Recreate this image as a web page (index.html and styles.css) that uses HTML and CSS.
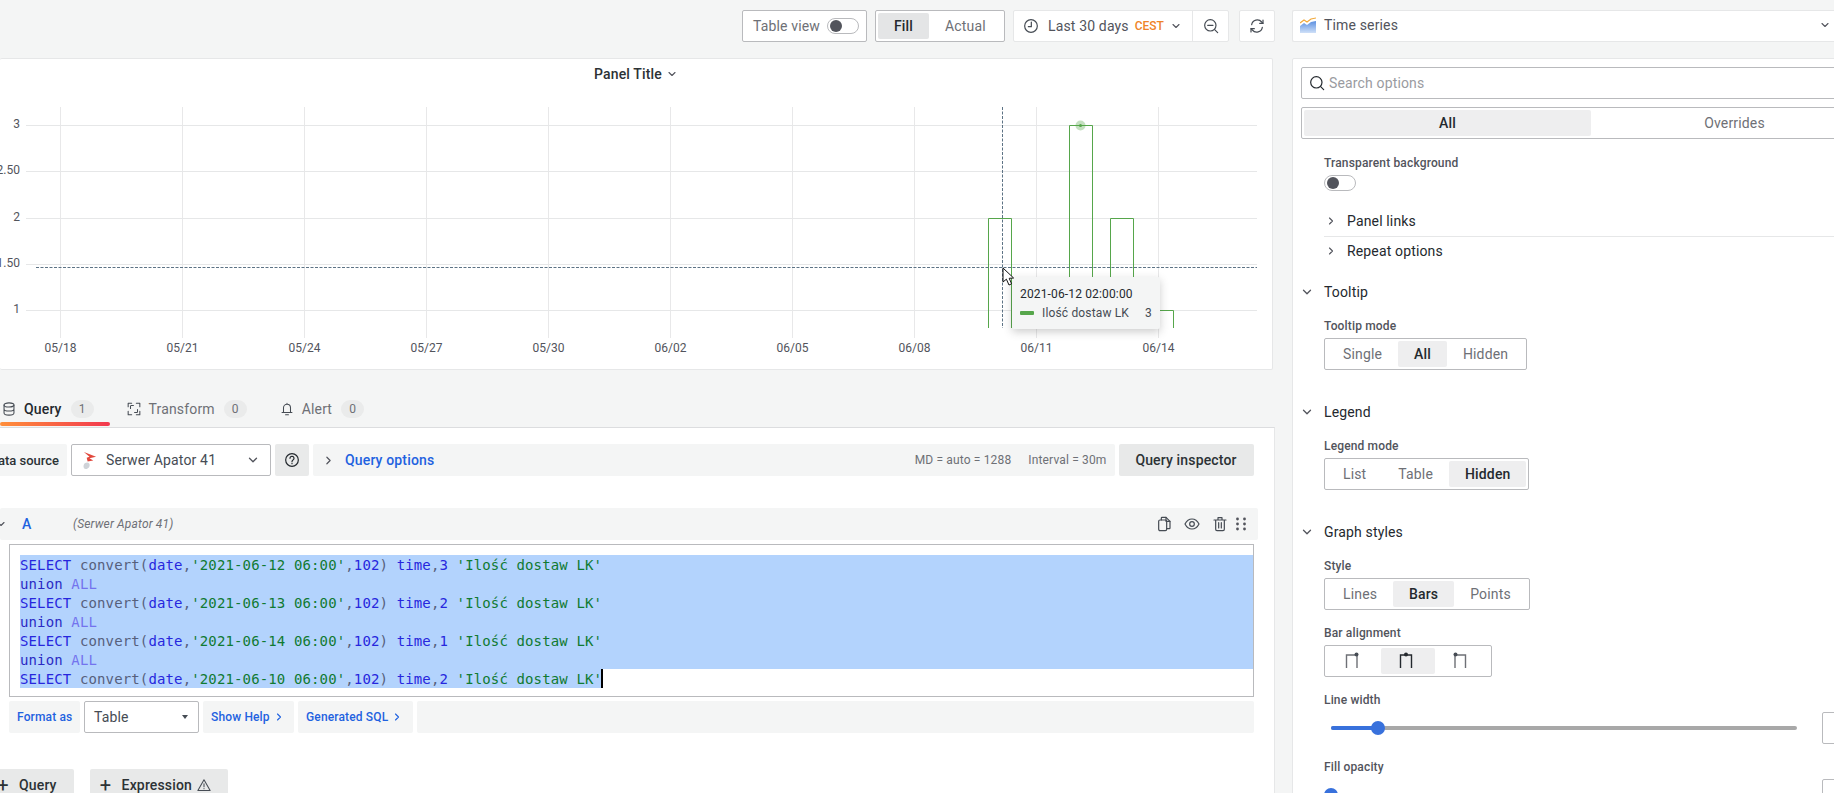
FILE: index.html
```html
<!DOCTYPE html>
<html lang="en">
<head>
  <meta charset="utf-8">
  <title>Edit panel</title>
  <link rel="stylesheet" href="styles.css">
</head>
<body>
  <div class="page">

    <!-- left: toolbar, chart, query editor -->
    <div class="main">
      <div class="toolbar">
        <div class="box table-view">
          <span>Table view</span>
          <span class="switch"></span>
        </div>
        <div class="box radio top-radio">
          <span class="seg active">Fill</span>
          <span class="seg">Actual</span>
        </div>
        <div class="time-group">
          <div class="time-range">
            <svg class="icon-16" viewBox="0 0 24 24"><circle cx="12" cy="12" r="9.5"/><path d="M12.5 6v7H8"/></svg>
            <span class="time-label">Last 30 days</span>
            <span class="tz">CEST</span>
            <svg class="chev" viewBox="0 0 24 24"><path d="M6 9l6 6 6-6"/></svg>
          </div>
          <div class="time-zoom">
            <svg class="icon-16" viewBox="0 0 24 24"><circle cx="11" cy="11" r="8.5"/><path d="M7 11h8M17.5 17.5L22 22"/></svg>
          </div>
        </div>
        <div class="refresh">
          <svg class="icon-16" viewBox="0 0 24 24"><path d="M4 10a8.5 8.5 0 0 1 15-4l2 2M20 14a8.5 8.5 0 0 1-15 4l-2-2"/><path d="M21 3v5h-5M3 21v-5h5"/></svg>
        </div>
      </div>

      <div class="panel">
        <div class="panel-title">Panel Title
          <svg class="chev" viewBox="0 0 24 24"><path d="M6 9l6 6 6-6"/></svg>
        </div>
        <svg class="chart" viewBox="0 107 1272 262" width="1272" height="262">
          <g class="grid-v">
            <path d="M60.5 107V338M182.5 107V338M304.5 107V338M426.5 107V338M548.5 107V338M670.5 107V338M792.5 107V338M914.5 107V338M1036.5 107V338M1158.5 107V338"/>
          </g>
          <g class="grid-h">
            <path d="M26 125.5H1257M26 171.5H1257M26 218.5H1257M26 264.5H1257M26 310.5H1257"/>
          </g>
          <g class="axis-y">
            <text x="20" y="128">3</text>
            <text x="20" y="174">2.50</text>
            <text x="20" y="221">2</text>
            <text x="20" y="267">1.50</text>
            <text x="20" y="313">1</text>
          </g>
          <g class="axis-x">
            <text x="60.5" y="352">05/18</text>
            <text x="182.5" y="352">05/21</text>
            <text x="304.5" y="352">05/24</text>
            <text x="426.5" y="352">05/27</text>
            <text x="548.5" y="352">05/30</text>
            <text x="670.5" y="352">06/02</text>
            <text x="792.5" y="352">06/05</text>
            <text x="914.5" y="352">06/08</text>
            <text x="1036.5" y="352">06/11</text>
            <text x="1158.5" y="352">06/14</text>
          </g>
          <path class="bars" d="M988.5 328V218.5H1011.5V328M1069.5 328V125.5H1092.5V328M1110.5 328V218.5H1133.5V328M1150.5 328V310.5H1173.5V328"/>
          <path class="cross" d="M36 267.5H1257M1002.5 107V328"/>
          <circle class="hover-ring" cx="1080.5" cy="125.5" r="5"/>
          <circle class="hover-dot" cx="1080.5" cy="125.5" r="1.5"/>
        </svg>
        <div class="chart-tip">
          <div class="tip-time">2021-06-12 02:00:00</div>
          <div class="tip-row">
            <span class="tip-swatch"></span>
            <span class="tip-name">Ilość dostaw LK</span>
            <span class="tip-val">3</span>
          </div>
        </div>
        <svg class="mouse" viewBox="0 0 13 19" width="13" height="19"><path d="M1 1V15L4.4 12.2L7 18L9.6 16.8L7.2 11.3L11.6 11Z"/></svg>
      </div>

      <div class="tabs">
        <div class="tab tab-active">
          <svg class="icon-14" viewBox="0 0 24 24"><ellipse cx="12" cy="5" rx="8.5" ry="3.5"/><path d="M3.5 5v14c0 2 3.8 3.5 8.5 3.5s8.5-1.500 8.500-3.500V5M3.500 12c0 2 3.800 3.500 8.500 3.500s8.500-1.500 8.500-3.500"/></svg>
          <span>Query</span><span class="badge">1</span>
        </div>
        <div class="tab">
          <svg class="icon-14" viewBox="0 0 24 24"><path d="M2 8V2h6M16 2h6v6M22 16v6h-6M8 22H2v-6M7 6h4M6 7v4M18 13v4M13 18h4"/></svg>
          <span>Transform</span><span class="badge">0</span>
        </div>
        <div class="tab">
          <svg class="icon-14" viewBox="0 0 24 24"><path d="M6 17V10a6 6 0 0 1 12 0v7M3.500 18h17M9.500 22h5M12 4V2"/></svg>
          <span>Alert</span><span class="badge">0</span>
        </div>
      </div>

      <div class="editor-pane">
        <div class="ds-row">
          <div class="ds-label">Data source</div>
          <div class="ds-select">
            <svg class="ds-logo" viewBox="0 0 16 20" width="15" height="19">
              <path fill="#e2483d" d="M2 1l13 5-7 1.500 4 2.500-6 1-1-4 3-1z"/>
              <path fill="#cfd3d8" d="M3 13c3-2 6 0 5 3s-5 4-6 2 0-4 1-5z"/>
            </svg>
            <span class="ds-name">Serwer Apator 41</span>
            <svg class="chev" viewBox="0 0 24 24"><path d="M6 9l6 6 6-6"/></svg>
          </div>
          <div class="ds-help">
            <svg class="icon-16 dark" viewBox="0 0 24 24"><circle cx="12" cy="12" r="9.500"/><path d="M9 9.500a3 3 0 1 1 4.500 2.600c-1 .6-1.500 1.200-1.500 2.400M12 17v.5"/></svg>
          </div>
          <div class="options-bar">
            <svg class="chev-right" viewBox="0 0 24 24"><path d="M9 6l6 6-6 6"/></svg>
            <span class="options-link">Query options</span>
            <span class="options-meta">MD = auto = 1288</span>
            <span class="options-meta">Interval = 30m</span>
          </div>
          <div class="btn-inspector">Query inspector</div>
        </div>

        <div class="query-row">
          <svg class="chev" viewBox="0 0 24 24"><path d="M6 9l6 6 6-6"/></svg>
          <span class="query-letter">A</span>
          <span class="query-ds">(Serwer Apator 41)</span>
          <div class="query-actions">
            <svg class="icon-16" viewBox="0 0 24 24"><path d="M8 6V3a1 1 0 0 1 1-1h6l6 6v10a1 1 0 0 1-1 1h-4"/><path d="M15 2v6h6"/><rect x="4" y="6" width="12" height="16" rx="2"/></svg>
            <svg class="icon-16" viewBox="0 0 24 24"><path d="M1.500 12C4 7 8 4.500 12 4.500S20 7 22.500 12C20 17 16 19.500 12 19.500S4 17 1.500 12z"/><circle cx="12" cy="12" r="3.500"/></svg>
            <svg class="icon-16" viewBox="0 0 24 24"><path d="M3 6h18M9 6V2.500h6V6M5.500 6v14a2 2 0 0 0 2 2h9a2 2 0 0 0 2-2V6M10 10v8M14 10v8"/></svg>
            <svg class="grip" viewBox="0 0 10 14" width="10" height="14"><circle cx="1.500" cy="2" r="1.400"/><circle cx="8.500" cy="2" r="1.400"/><circle cx="1.500" cy="7" r="1.400"/><circle cx="8.500" cy="7" r="1.400"/><circle cx="1.500" cy="12" r="1.400"/><circle cx="8.500" cy="12" r="1.400"/></svg>
          </div>
        </div>

        <div class="code">
          <div class="code-line"><span class="k">SELECT</span> <span class="f">convert(</span><span class="k">date</span><span class="f">,</span><span class="s">'2021-06-12 06:00'</span><span class="f">,</span><span class="k">102</span><span class="f">)</span> <span class="k">time</span><span class="f">,</span><span class="k">3</span> <span class="s">'Ilość dostaw LK'</span></div>
          <div class="code-line"><span class="u">union</span> <span class="a">ALL</span></div>
          <div class="code-line"><span class="k">SELECT</span> <span class="f">convert(</span><span class="k">date</span><span class="f">,</span><span class="s">'2021-06-13 06:00'</span><span class="f">,</span><span class="k">102</span><span class="f">)</span> <span class="k">time</span><span class="f">,</span><span class="k">2</span> <span class="s">'Ilość dostaw LK'</span></div>
          <div class="code-line"><span class="u">union</span> <span class="a">ALL</span></div>
          <div class="code-line"><span class="k">SELECT</span> <span class="f">convert(</span><span class="k">date</span><span class="f">,</span><span class="s">'2021-06-14 06:00'</span><span class="f">,</span><span class="k">102</span><span class="f">)</span> <span class="k">time</span><span class="f">,</span><span class="k">1</span> <span class="s">'Ilość dostaw LK'</span></div>
          <div class="code-line"><span class="u">union</span> <span class="a">ALL</span></div>
          <div class="code-line last"><div class="code-sel"><span class="k">SELECT</span> <span class="f">convert(</span><span class="k">date</span><span class="f">,</span><span class="s">'2021-06-10 06:00'</span><span class="f">,</span><span class="k">102</span><span class="f">)</span> <span class="k">time</span><span class="f">,</span><span class="k">2</span> <span class="s">'Ilość dostaw LK'</span></div></div>
        </div>

        <div class="format-row">
          <div class="format-cell format-label">Format as</div>
          <div class="format-select"><span>Table</span><span class="caret"></span></div>
          <div class="format-cell format-help">Show Help <svg class="chev-right blue" viewBox="0 0 24 24"><path d="M9 6l6 6-6 6"/></svg></div>
          <div class="format-cell format-sql">Generated SQL <svg class="chev-right blue" viewBox="0 0 24 24"><path d="M9 6l6 6-6 6"/></svg></div>
          <div class="format-fill"></div>
        </div>

        <div class="add-row">
          <div class="btn-add"><span class="plus">+</span>Query</div>
          <div class="btn-add"><span class="plus">+</span>Expression
            <svg class="icon-14" viewBox="0 0 24 24"><path d="M12 3L1.500 21.500h21zM12 10v5M12 18v.5"/></svg>
          </div>
        </div>
      </div>
    </div>

    <!-- right: visualization options -->
    <div class="side">
      <div class="viz-select">
        <svg class="viz-icon" viewBox="0 0 16 16" width="16" height="16">
          <defs><linearGradient id="area" x1="0" y1="0" x2="0" y2="1"><stop offset="0" stop-color="#5b8fe0"/><stop offset="1" stop-color="#cfe0f8"/></linearGradient></defs>
          <path fill="url(#area)" d="M0 9l4-3 3 2 4-3 5-1v12H0z"/>
          <path fill="none" stroke="#f2a93b" stroke-width="1.200" d="M0 6l4-3 3 2 4-3 5-1"/>
        </svg>
        <span>Time series</span>
        <svg class="chev" viewBox="0 0 24 24"><path d="M6 9l6 6 6-6"/></svg>
      </div>

      <div class="options">
        <div class="search">
          <svg class="icon-16 dark" viewBox="0 0 24 24"><circle cx="11" cy="11" r="8.500"/><path d="M17.500 17.500L22 22"/></svg>
          <span>Search options</span>
        </div>
        <div class="box radio mode-tabs">
          <span class="seg active">All</span>
          <span class="seg">Overrides</span>
        </div>

        <div class="opts-body">
          <div class="opt-label first-label">Transparent background</div>
          <span class="switch switch-opt"></span>

          <div class="fold fold-links">
            <svg class="chev-right" viewBox="0 0 24 24"><path d="M9 6l6 6-6 6"/></svg>Panel links
          </div>
          <div class="fold fold-repeat">
            <svg class="chev-right" viewBox="0 0 24 24"><path d="M9 6l6 6-6 6"/></svg>Repeat options
          </div>

          <div class="section section-first">
            <svg class="chev" viewBox="0 0 24 24"><path d="M6 9l6 6 6-6"/></svg>Tooltip
          </div>
          <div class="opt-label">Tooltip mode</div>
          <div class="box radio">
            <span class="seg">Single</span><span class="seg active">All</span><span class="seg">Hidden</span>
          </div>

          <div class="section">
            <svg class="chev" viewBox="0 0 24 24"><path d="M6 9l6 6 6-6"/></svg>Legend
          </div>
          <div class="opt-label">Legend mode</div>
          <div class="box radio">
            <span class="seg">List</span><span class="seg">Table</span><span class="seg active">Hidden</span>
          </div>

          <div class="section">
            <svg class="chev" viewBox="0 0 24 24"><path d="M6 9l6 6 6-6"/></svg>Graph styles
          </div>
          <div class="opt-label">Style</div>
          <div class="box radio">
            <span class="seg">Lines</span><span class="seg active">Bars</span><span class="seg">Points</span>
          </div>

          <div class="opt-label tight">Bar alignment</div>
          <div class="box radio">
            <span class="seg seg-icon"><svg class="bar-icon" viewBox="0 0 14 18" width="14" height="18"><path d="M1.500 17V4h10.500v13"/><circle cx="11.500" cy="3.500" r="2"/></svg></span>
            <span class="seg seg-icon active"><svg class="bar-icon" viewBox="0 0 14 18" width="14" height="18"><path d="M1.500 17V4h11v13"/><circle cx="7" cy="3.500" r="2"/></svg></span>
            <span class="seg seg-icon"><svg class="bar-icon" viewBox="0 0 14 18" width="14" height="18"><path d="M2 17V4h10.500v13"/><circle cx="2.500" cy="3.500" r="2"/></svg></span>
          </div>

          <div class="opt-label tight">Line width</div>
          <div class="slider-row">
            <div class="slider">
              <div class="slider-fill" style="width: 47px"></div>
              <div class="slider-thumb" style="left: 47px"></div>
            </div>
            <div class="slider-input"></div>
          </div>

          <div class="opt-label tight">Fill opacity</div>
          <div class="slider-row">
            <div class="slider">
              <div class="slider-fill" style="width: 0"></div>
              <div class="slider-thumb" style="left: 0"></div>
            </div>
            <div class="slider-input"></div>
          </div>
        </div>
      </div>
    </div>
  </div>
</body>
</html>
```

FILE: styles.css
```css
html, body {
  margin: 0;
  padding: 0;
  width: 1834px;
  height: 793px;
  overflow: hidden;
  background: #f4f5f5;
}

body {
  font-family: Roboto, "Liberation Sans", sans-serif;
  font-size: 14px;
  letter-spacing: .15px;
  color: #464c54;
}

svg { flex: none; display: block; }

.page {
  display: flex;
  width: 1834px;
  height: 793px;
  overflow: hidden;
}

.main {
  flex: none;
  width: 1275px;
  margin-right: 17px;
}

.side {
  flex: none;
  width: 600px;
  padding-top: 10px;
}

/* Icons */

.icon-16, .icon-14 {
  fill: none;
  stroke: #464c54;
  stroke-width: 1.8;
  stroke-linecap: round;
  stroke-linejoin: round;
}
.icon-16 { width: 16px; height: 16px; }
.icon-14 { width: 14px; height: 14px; }
.icon-16.dark { stroke: #24292e; }

.chev, .chev-right {
  width: 14px;
  height: 14px;
  fill: none;
  stroke: #52545c;
  stroke-width: 2.2;
  stroke-linecap: round;
  stroke-linejoin: round;
}
.chev-right.blue { display: inline-block; stroke: #1f62e0; width: 12px; height: 12px; vertical-align: -2px; }

/* Shared boxes */

.box {
  box-sizing: border-box;
  display: inline-flex;
  align-items: center;
  height: 32px;
  background: #fff;
  border: 1px solid #b9babd;
  border-radius: 2px;
}

.radio { padding: 0 2px; vertical-align: top; }

.seg {
  display: flex;
  align-items: center;
  height: 26px;
  padding: 0 16px;
  color: #6e7076;
  border-radius: 2px;
}
.seg.active {
  background: #eeeeef;
  color: #24292e;
  font-weight: 500;
}

.switch {
  box-sizing: border-box;
  display: block;
  width: 32px;
  height: 16px;
  border: 1px solid #b9babd;
  border-radius: 8px;
  background: #fff;
  position: relative;
}
.switch::after {
  content: "";
  position: absolute;
  left: 2px;
  top: 1px;
  width: 12px;
  height: 12px;
  border-radius: 50%;
  background: #52545c;
}

/* Toolbar */

.toolbar {
  display: flex;
  justify-content: flex-end;
  height: 32px;
  margin-top: 10px;
  margin-bottom: 16px;
}

.table-view {
  width: 125px;
  padding-left: 10px;
  gap: 7px;
  color: #6e7076;
}

.top-radio { margin-left: 8px; width: 130px; }
.top-radio .seg.active { background: #e4e5e6; }

.time-group {
  display: flex;
  margin-left: 8px;
  height: 32px;
  background: #fff;
  border: 1px solid #e6e7e8;
  border-radius: 2px;
  box-sizing: border-box;
}

.time-range {
  display: flex;
  align-items: center;
  width: 179px;
  box-sizing: border-box;
  padding-left: 9px;
  padding-bottom: 1px;
  border-right: 1px solid #e6e7e8;
}
.time-label { margin-left: 9px; color: #52545c; }
.tz { margin-left: 6px; color: #ef8428; font-size: 12px; font-weight: 500; letter-spacing: 0; }
.time-range .chev { margin-left: 6px; width: 12px; height: 12px; }

.time-zoom {
  display: flex;
  align-items: center;
  justify-content: center;
  width: 35px;
}

.refresh {
  display: flex;
  align-items: center;
  justify-content: center;
  box-sizing: border-box;
  width: 36px;
  height: 32px;
  margin-left: 10px;
  background: #fff;
  border: 1px solid #e6e7e8;
  border-radius: 2px;
}

/* Chart panel */

.panel {
  position: relative;
  box-sizing: border-box;
  width: 1273px;
  height: 312px;
  background: #fff;
  border: 1px solid #e6e7e8;
  border-left: 0;
  border-radius: 2px;
  overflow: hidden;
}

.panel-title {
  display: flex;
  align-items: center;
  justify-content: center;
  gap: 4px;
  height: 30px;
  margin-bottom: 18px;
  color: #2c3235;
  font-weight: 500;
}
.panel-title .chev { width: 12px; height: 12px; }

.chart text { font-family: Roboto, sans-serif; font-size: 12px; letter-spacing: 0; fill: #52545c; }
.axis-y text { text-anchor: end; }
.axis-x text { text-anchor: middle; }
.grid-v path { fill: none; stroke: #e8e8e9; stroke-width: 1; }
.grid-h path { fill: none; stroke: #e6e7e8; stroke-width: 1; }
.bars { fill: none; stroke: #56a64b; stroke-width: 1; }
.cross { fill: none; stroke: #5d7385; stroke-width: 1; stroke-dasharray: 3 1.500; }
.hover-ring { fill: #56a64b; opacity: .35; }
.hover-dot { fill: #56a64b; }

.chart-tip {
  position: absolute;
  left: 1012px;
  top: 218px;
  box-sizing: border-box;
  width: 148px;
  height: 52px;
  padding: 9px 8px 0;
  background: #f4f5f5;
  font-size: 12px;
  box-shadow: 0 3px 8px rgba(60, 60, 60, .25);
  border-radius: 2px;
}
.tip-time { color: #24292e; line-height: 16px; }
.tip-row { display: flex; align-items: center; margin-top: 2px; line-height: 18px; color: #464c54; }
.tip-swatch { width: 14px; height: 4px; margin-right: 8px; background: #56a64b; border-radius: 1px; }
.tip-name { flex: 1; }

.mouse {
  position: absolute;
  left: 1002px;
  top: 208px;
}
.mouse path { fill: #fff; stroke: #111; stroke-width: 1; stroke-linejoin: round; }

/* Tabs */

.tabs {
  display: flex;
  height: 57px;
  align-items: flex-start;
}

.tab {
  display: flex;
  align-items: center;
  height: 18px;
  margin-top: 30px;
  margin-right: 33px;
  color: #6e7076;
}
.tab svg { margin-right: 8px; }
.tab .badge { margin-left: 9px; }

.tab-active {
  position: relative;
  padding: 0 16px 0 2px;
  margin-right: 17px;
  color: #24292e;
  font-weight: 500;
}
.tab-active::after {
  content: "";
  position: absolute;
  left: 0;
  right: 0;
  top: 22px;
  height: 4px;
  border-radius: 2px;
  background: linear-gradient(90deg, #ff8f3a, #f2384f);
}

.badge {
  display: flex;
  align-items: center;
  justify-content: center;
  width: 23px;
  height: 18px;
  border-radius: 9px;
  background: #eaebeb;
  color: #6e7076;
  font-size: 12px;
  font-weight: 400;
}

/* Query editor */

.editor-pane {
  box-sizing: border-box;
  height: 366px;
  padding-top: 16px;
  background: #fff;
  border-top: 1px solid #dcdddf;
  border-right: 1px solid #e6e7e8;
}

.ds-row {
  display: flex;
  gap: 4px;
  height: 32px;
  width: 1270.500px;
  margin-left: -17px;
}

.ds-label {
  display: flex;
  align-items: center;
  justify-content: flex-end;
  box-sizing: border-box;
  padding: 0 8px;
  width: 84px;
  background: #f4f5f5;
  color: #2c3235;
  font-size: 13px;
  font-weight: 500;
  letter-spacing: 0;
  white-space: nowrap;
  border-radius: 2px;
}

.ds-select {
  box-sizing: border-box;
  display: flex;
  align-items: center;
  width: 200px;
  padding: 0 10px;
  border: 1px solid #b9babd;
  border-radius: 2px;
}
.ds-name { margin-left: 9px; flex: 1; color: #464c54; }

.ds-help {
  display: flex;
  align-items: center;
  justify-content: center;
  width: 34px;
  background: #e9eaea;
  border-radius: 2px;
}

.options-bar {
  flex: 1;
  display: flex;
  align-items: center;
  padding: 0 8px 0 9px;
  background: #f4f5f5;
  border-radius: 2px;
}
.options-bar .chev-right { width: 13px; height: 13px; }
.options-link { margin-left: 10px; margin-right: auto; color: #1f62e0; font-weight: 500; }
.options-meta { margin-left: 17px; font-size: 12px; color: #6e7076; }

.btn-inspector {
  display: flex;
  align-items: center;
  justify-content: center;
  width: 135px;
  background: #e8e9e9;
  color: #2c3235;
  font-weight: 500;
  border-radius: 2px;
}

.query-row {
  display: flex;
  align-items: center;
  width: 1257.500px;
  height: 32px;
  margin-top: 32px;
  background: #f4f5f5;
  border-radius: 2px;
}
.query-row .chev { margin-left: -5px; width: 12px; height: 12px; }
.query-letter { margin-left: 15px; width: 51px; color: #1f62e0; font-weight: 500; }
.query-ds { font-size: 12px; font-style: italic; color: #6e7076; }

.query-actions {
  display: flex;
  align-items: center;
  gap: 12px;
  margin-left: auto;
  padding-right: 12px;
}
.grip { margin-left: -4px; }
.grip circle { fill: #52545c; }

.code {
  box-sizing: border-box;
  width: 1244.500px;
  height: 153px;
  margin: 4px 0 0 9px;
  padding-top: 10px;
  border: 1px solid #b9babd;
  font-family: "DejaVu Sans Mono", "Liberation Mono", monospace;
  font-size: 14px;
  letter-spacing: .13px;
}

.code-line {
  height: 19px;
  line-height: 21px;
  margin-left: 10px;
  background: #b3d3fd;
  white-space: pre;
  overflow: hidden;
}
.code-line.last { background: none; }
.code-sel {
  display: inline-block;
  vertical-align: top;
  width: 581px;
  height: 19px;
  background: #b3d3fd;
  border-right: 2px solid #000;
}

.k { color: #2727dd; }
.f { color: #56607c; }
.s { color: #107a32; }
.u { color: #2a2ac4; }
.a { color: #7373ee; }

.format-row {
  display: flex;
  gap: 4px;
  width: 1244.500px;
  height: 32px;
  margin: 4px 0 0 9px;
}

.format-cell {
  display: flex;
  align-items: center;
  gap: 3px;
  box-sizing: border-box;
  padding: 0 8px;
  background: #f4f5f5;
  color: #1f62e0;
  font-size: 12px;
  font-weight: 500;
  border-radius: 2px;
  white-space: nowrap;
}
.format-label { width: 71px; }
.format-help { width: 91px; }
.format-sql { width: 115px; }

.format-select {
  box-sizing: border-box;
  display: flex;
  align-items: center;
  justify-content: space-between;
  width: 115px;
  padding: 0 10px 0 9px;
  border: 1px solid #b9babd;
  border-radius: 2px;
  color: #464c54;
}
.caret {
  width: 0;
  height: 0;
  border-left: 3.500px solid transparent;
  border-right: 3.500px solid transparent;
  border-top: 4px solid #464c54;
}

.format-fill {
  flex: 1;
  background: #f4f5f5;
  border-radius: 2px;
}

.add-row {
  display: flex;
  gap: 16px;
  margin-top: 36px;
  margin-left: -13px;
}

.btn-add {
  display: flex;
  align-items: center;
  height: 32px;
  padding: 0 17px 0 8px;
  background: #e8e9e9;
  color: #2c3235;
  font-weight: 500;
  border-radius: 2px;
}
.plus { width: 16px; margin-right: 8px; text-align: center; font-size: 20px; line-height: 18px; font-weight: 400; }
.btn-add .icon-14 { margin-left: 5px; }

/* Options column */

.viz-select {
  box-sizing: border-box;
  display: flex;
  align-items: center;
  width: 545px;
  height: 32px;
  padding: 0 0 2px 7px;
  margin-bottom: 16px;
  background: #fff;
  border: 1px solid #e6e7e8;
  border-right: 0;
  border-radius: 2px;
  color: #52545c;
}
.viz-icon { margin-right: 8px; }
.viz-select .chev { margin-left: auto; margin-right: 6px; width: 12px; height: 12px; }

.options {
  box-sizing: border-box;
  height: 740px;
  padding: 8px 0 0 8px;
  background: #fff;
  border: 1px solid #e6e7e8;
  border-radius: 2px;
}

.search {
  box-sizing: border-box;
  display: flex;
  align-items: center;
  gap: 4px;
  width: 600px;
  height: 32px;
  padding-left: 7px;
  border: 1px solid #b9babd;
  border-radius: 2px;
  color: #9a9ba0;
}

.mode-tabs {
  display: flex;
  width: 580px;
  height: 32px;
  margin-top: 8px;
}
.mode-tabs .seg {
  flex: 1;
  justify-content: center;
  padding: 0;
}

.opts-body { padding-left: 23px; }

.opt-label {
  height: 16px;
  margin-top: 16px;
  margin-bottom: 4px;
  line-height: 16px;
  font-size: 12px;
  font-weight: 500;
  color: #52545c;
}
.opt-label.tight { margin-top: 15px; }

.fold {
  display: flex;
  align-items: center;
  gap: 10px;
  width: 600px;
  color: #24292e;
}
.fold .chev-right { width: 12px; height: 12px; margin-left: 1px; }
.fold-links { margin-top: 14px; height: 32px; box-sizing: border-box; border-bottom: 1px solid #e6e7e8; }
.fold-repeat { height: 28px; }

.section {
  display: flex;
  align-items: center;
  height: 20px;
  margin-top: 32px;
  margin-left: -24px;
  gap: 10px;
  color: #24292e;
}
.section .chev { width: 14px; height: 14px; }
.section-first { margin-top: 17px; }

.seg-icon { justify-content: center; width: 54px; padding: 0 4px 3px 0; box-sizing: border-box; }
.bar-icon path { fill: none; stroke: #6e7076; stroke-width: 1.400; }
.bar-icon circle { fill: #464c54; }
.active .bar-icon path { stroke: #24292e; }
.active .bar-icon circle { fill: #24292e; }

.slider-row {
  display: flex;
  align-items: center;
  height: 32px;
}

.slider {
  position: relative;
  width: 466px;
  height: 4px;
  margin-left: 7px;
  background: #a8a8a8;
  border-radius: 2px;
}
.slider-fill {
  height: 4px;
  background: #3871dc;
  border-radius: 2px;
}
.slider-thumb {
  position: absolute;
  top: -5px;
  margin-left: -7px;
  width: 14px;
  height: 14px;
  border-radius: 50%;
  background: #3871dc;
}

.slider-input {
  box-sizing: border-box;
  width: 60px;
  height: 32px;
  margin-left: 25px;
  border: 1px solid #b9babd;
  border-radius: 2px;
}
```
